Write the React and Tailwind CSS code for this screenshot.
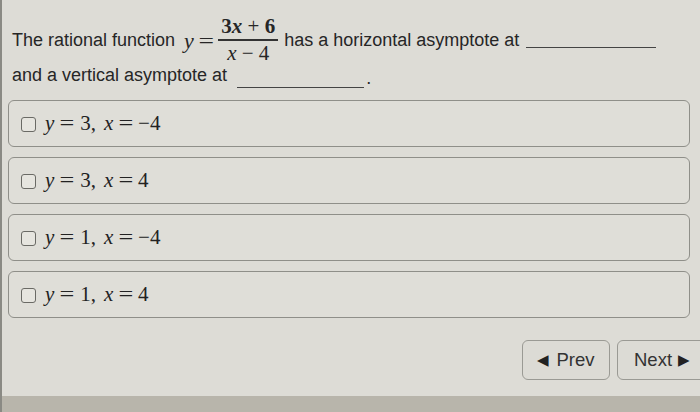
const options = [
  { y: "3", x: "−4" },
  { y: "3", x: "4" },
  { y: "1", x: "−4" },
  { y: "1", x: "4" },
];

const serif = "font-['Liberation_Serif',serif]";

const MathOption = ({ y, x }) => (
  <span className={`${serif} text-[21px] text-[#222] flex items-baseline`}>
    <i>y</i>
    <span className="ml-[7px] scale-x-125">=</span>
    <span className="ml-[7px]">{y}</span>
    <span>,</span>
    <i className="ml-[8px]">x</i>
    <span className="ml-[7px] scale-x-125">=</span>
    <span className="ml-[6px]">{x}</span>
  </span>
);

const App = () => {
  return (
    <div className="w-[700px] h-[412px] overflow-hidden bg-[#dddcd6] font-['Liberation_Sans',Arial,sans-serif] text-[#262626] border-l-2 border-[#8a8a84] flex flex-col">
      <div className="h-[396px] flex flex-col">
        {/* Question */}
        <div className="pl-[10px] pt-[15px] flex items-center text-[18px] h-[65px]">
          <span>The rational function</span>
          <span className={`${serif} italic text-[22px] ml-[9px]`}>y</span>
          <span className={`${serif} text-[22px] ml-[6px] mr-[6px] scale-x-125`}>=</span>
          <span className={`${serif} inline-flex flex-col items-center text-[21px] leading-[25px]`}>
            <span className="px-[3px] font-bold">
              3<i>x</i> <span className="font-normal">+</span> 6
            </span>
            <span className="h-[1.5px] w-full bg-[#333]" />
            <span className="px-[3px]">
              <i>x</i> − 4
            </span>
          </span>
          <span className="ml-[6px]">has a horizontal asymptote at</span>
          <span className="ml-[7px] w-[130px] h-[33px] border-b border-[#444] self-start" />
        </div>
        <div className="pl-[10px] flex items-center text-[18px] h-[20px]">
          <span>and a vertical asymptote at</span>
          <span className="ml-[10px] w-[127px] h-[23px] border-b border-[#444] self-start" />
          <span className="ml-[2px] mt-[6px]">.</span>
        </div>

        {/* Options */}
        <div className="mt-[15px] ml-[6px] w-[682px] flex flex-col gap-[10px]">
          {options.map((o, i) => (
            <div
              key={i}
              className="h-[47px] border-[1.5px] border-[#8f8f89] rounded-[6px] bg-[#dfded8] flex items-center pl-[12px] gap-[9px]"
            >
              <span className="w-[15px] h-[15px] border-[1.5px] border-[#6a6a65] rounded-[3px] bg-[#e6e5df] mt-[2px]" />
              <MathOption y={o.y} x={o.x} />
            </div>
          ))}
        </div>

        {/* Nav buttons */}
        <div className="mt-[22px] flex justify-end gap-[7px] mr-[-12px]">
          <button className="w-[88px] h-[40px] border border-[#9a9a94] rounded-[6px] bg-[#dcdbd5] flex items-center justify-center gap-[7px] text-[18.5px] text-[#333]">
            <span className="text-[15px] text-[#222]">◀</span>
            <span>Prev</span>
          </button>
          <button className="w-[95px] h-[40px] border border-[#9a9a94] rounded-[6px] bg-[#dcdbd5] flex items-center pl-[16px] gap-[6px] text-[18.5px] text-[#333]">
            <span>Next</span>
            <span className="text-[15px] text-[#222]">▶</span>
          </button>
        </div>
      </div>
      <div className="flex-1 bg-[#b8b5ab]" />
    </div>
  );
};

export default App;
